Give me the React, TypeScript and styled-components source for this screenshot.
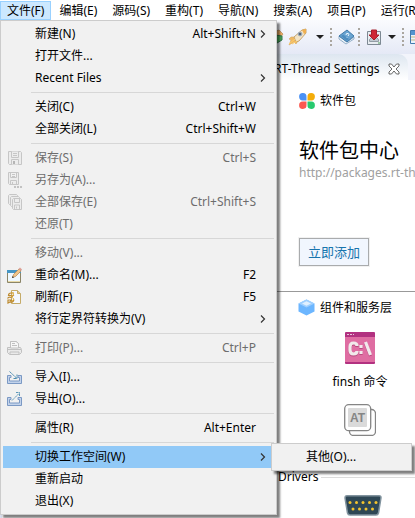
import React from "react";
import styled, { createGlobalStyle, css } from "styled-components";

const GlobalStyle = createGlobalStyle`
  * { box-sizing: border-box; }
  body {
    margin: 0;
    overflow: hidden;
    background: #fff;
    color: #000;
    font: 12px/16px "Noto Sans", "Noto Sans CJK SC", sans-serif;
  }
  button { font: inherit; color: inherit; }
  svg { display: block; flex: none; }
`;

const Window = styled.div`
  display: flex;
  flex-direction: column;
  min-height: 100vh;
  overflow: hidden;
`;

const MenuBar = styled.nav`
  position: relative;
  z-index: 2;
  display: flex;
  gap: 1px;
  height: 20px;
  background: #fff;
`;

const MenuTitle = styled.button<{ $open?: boolean }>`
  flex: none;
  height: 19px;
  margin-top: 1px;
  padding: 1px 6px 0;
  line-height: 16px;
  white-space: nowrap;
  border: 1px solid ${(p) => (p.$open ? "#99d1ff" : "transparent")};
  background: ${(p) => (p.$open ? "#cce8ff" : "transparent")};
`;

const popup = css`
  position: absolute;
  border: 1px solid #ccc;
  background: #f1f1f1;
  padding: 2px;
  box-shadow: 3px 3px 2px rgba(0, 0, 0, 0.5);
`;

const DropDown = styled.div`
  ${popup}
  top: 20px;
  left: 0;
  width: 277px;
`;

const SubMenu = styled.div`
  ${popup}
  top: -3px;
  left: 100%;
  width: 141px;
  margin-left: -3px;
`;

const Entry = styled.div`
  position: relative;
`;

const Item = styled.button<{ $active?: boolean }>`
  display: grid;
  grid-template-columns: 28px 1fr auto 18px;
  align-items: center;
  width: 100%;
  height: 22px;
  padding: 0;
  border: 0;
  text-align: left;
  white-space: nowrap;
  background: ${(p) => (p.$active ? "#91c9f7" : "transparent")};
  &:disabled { color: #6d6d6d; }
`;

const Gutter = styled.span`
  padding-left: 4px;
`;

const Label = styled.span`
  padding-left: 4px;
`;

const Shortcut = styled.span``;

const Arrow = styled.span`
  padding-left: 4px;
`;

const Separator = styled.hr`
  height: 1px;
  margin: 3px 0 3px 28px;
  border: 0;
  background: #d7d7d7;
`;

const ToolBar = styled.div`
  display: flex;
  align-items: center;
  height: 34px;
  padding-left: 268px;
  background: linear-gradient(#fafbfe, #e5e9f6);
`;

const ToolButton = styled.button<{ $width?: number }>`
  display: grid;
  place-items: center;
  flex: none;
  width: ${(p) => p.$width ?? 16}px;
  height: 24px;
  padding: 0;
  border: 0;
  background: none;
`;

const Grip = styled.span`
  flex: none;
  width: 2px;
  height: 18px;
  margin: 0 4px 0 2px;
  background: repeating-linear-gradient(#aaa69f 0 2px, transparent 2px 4px);
`;

const Workbench = styled.div`
  display: grid;
  grid-template-columns: 277px 1fr;
  flex: 1;
`;

const Sidebar = styled.aside`
  border-left: 2px solid #d9dfef;
`;

const Editor = styled.main`
  min-width: 0;
`;

const TabStrip = styled.div`
  display: flex;
  height: 26px;
  background: #f2f4fb;
`;

const Tab = styled.div`
  display: flex;
  align-items: center;
  gap: 8px;
  margin-left: -9px;
  padding: 3px 8px 0 6px;
  white-space: nowrap;
  border-radius: 0 10px 0 0;
  background: linear-gradient(#dde6f0, #fff);
`;

const CloseButton = styled.button`
  padding: 0;
  border: 0;
  background: none;
`;

const Packages = styled.section`
  height: 212px;
  padding: 13px 0 0 22px;
  border-bottom: 1px solid #999;
  white-space: nowrap;
`;

const SectionTitle = styled.h2`
  display: flex;
  align-items: center;
  gap: 5px;
  margin: 0;
  font-size: 12px;
  font-weight: 400;
  line-height: 16px;
`;

const CenterTitle = styled.h1`
  margin: 28px 0 0;
  font-size: 20px;
  font-weight: 400;
  line-height: 28px;
`;

const Address = styled.a`
  display: block;
  color: #a0a0a0;
  text-decoration: none;
`;

const AddButton = styled.button`
  display: block;
  height: 28px;
  margin-top: 57px;
  padding: 0 8px;
  font-size: 13px;
  color: #1874ad;
  border: 1px solid #a9abad;
  outline: 1px solid #f1f1f1;
  background: #f1f6fe;
`;

const Components = styled.section`
  padding-top: 7px;
`;

const ComponentTitle = styled(SectionTitle)`
  padding-left: 21px;
`;

const Tile = styled.button`
  display: flex;
  flex-direction: column;
  align-items: center;
  gap: 10px;
  width: 76px;
  margin: 16px 0 0 45px;
  padding: 0;
  border: 0;
  background: none;
`;

const AtTile = styled(Tile)`
  margin-top: 14px;
`;

const Group = styled.fieldset`
  min-width: 0;
  margin: 33px 0 0;
  padding: 0;
  border: 0;
  border-top: 1px solid #dcdcdc;
`;

const Legend = styled.legend`
  padding: 0 3px 0 1px;
`;

const DriverTile = styled(Tile)`
  width: 82px;
  margin-top: 10px;
`;

const SaveIcon = () => (
  <svg width="16" height="16" viewBox="0 0 16 16" fill="#ececec" stroke="#c6c6c6">
    <path d="M1.5 1.5h12l1 1v12h-12l-1-1z" />
    <path d="M4.5 1.5v6h7v-6M6 3.5h4M6 5.5h4M4.5 14.5v-5h7v5" />
    <path d="M6 11h2v3H6z" fill="#b5b5b5" stroke="none" />
  </svg>
);

const SaveAsIcon = () => (
  <svg width="16" height="16" viewBox="0 0 16 16" fill="#ececec" stroke="#c6c6c6">
    <path d="M1.500.5h10v12h-9l-1-1zM3.500.5v5h6v-5M5 2.500h3M5 4.500h3M3.500 12.500v-4h6v4M5.500 10v2" />
    <path d="M7 14h2v2H7zm3 0h2v2h-2zm3 0h2v2h-2z" fill="#aaa" stroke="#f1f1f1" strokeWidth=".4" />
  </svg>
);

const SaveAllIcon = () => (
  <svg width="16" height="16" viewBox="0 0 16 16" fill="#ececec" stroke="#c6c6c6">
    <path d="M1.500 1.500l1-1h7l1 1v9h-8l-1-1z" />
    <path d="M3.500 3.500l1-1h7l1 1v9h-8l-1-1z" />
    <path d="M5.500 5.500l1-1h7l1 1v10h-8l-1-1zM7.500 4.500v4h5v-4M7.500 15v-4h5v4M9.500 12.500v2" />
  </svg>
);

const RenameIcon = () => (
  <svg width="16" height="16" viewBox="0 0 16 16">
    <path d="M.5 3.500h13v12H.5z" fill="#eef8ff" stroke="#8b8568" />
    <path d="M0 3h14v3H0z" fill="#4596c5" />
    <path d="M1 14.500h12" stroke="#e7d9a8" />
    <path d="M5.500 10.500l1-3L12 2l2 2-5.500 5.500z" fill="#f0c58a" stroke="#b98f5e" strokeWidth=".8" />
    <path d="M11.500 2L13 .5l2 2L14 4z" fill="#dd9e93" />
    <path d="M5 11l.6-2 1.400 1.400z" fill="#333" />
  </svg>
);

const RefreshIcon = () => (
  <svg width="16" height="16" viewBox="0 0 16 16" fill="none">
    <path d="M4.500 1.500h6l3 3v10h-9z" fill="#f4f8fe" stroke="#c5ab69" />
    <path d="M10.500 1.500v3h3" fill="#e6cc91" stroke="#c5ab69" />
    <path d="M7 4H4Q1.500 4 1.500 6.500H6L4 8.500M.5 9.500Q1.500 7.500 4 8.500M7 10.500Q6 14 3 13L1 14v-3h4L3 12" stroke="#bd8a2f" strokeWidth="1.200" />
    <path d="M4.500 3L7 5 4.500 7M4.500 8L7 10l-2 2" stroke="#e5b84d" />
  </svg>
);

const PrintIcon = () => (
  <svg width="16" height="16" viewBox="0 0 16 16" fill="#eaeaea" stroke="#c1c1c1">
    <path d="M.5 7.500h3v-6h6l2 2v4h2l1 2v3l-2 2h-10l-2-2z" />
    <path d="M3.500 8V1.500H9l2.500 2V8zM5 3.500h3M5 5.500h5" fill="#f7f7f7" />
    <path d="M1 9.500h13M3 14v-2h9v2" />
  </svg>
);

const TransferIcon = ({ out = false }: { out?: boolean }) => (
  <svg width="16" height="16" viewBox="0 0 16 16" fill="none">
    <path d="M4 6.500H.5v8h14v-8H11v2h1.500v3.500h-10V8.500H4z" fill="#c3d3eb" stroke="#7b99c4" />
    {out ? (
      <path d="M5 9.500l7.500-7.500M9 1.500h3.500V5" stroke="#5b97b8" strokeDasharray="2 .5" />
    ) : (
      <path d="M2.500 2.500L10 9.500M10 5.500v4H6" stroke="#4b8db1" strokeDasharray="2 .5" />
    )}
  </svg>
);

const ArrowIcon = () => (
  <svg width="6" height="8" viewBox="0 0 6 8" fill="none" stroke="#333" strokeWidth="1.200">
    <path d="M1 .5l3.500 3.500L1 7.500" />
  </svg>
);

const PlugIcon = () => (
  <svg width="16" height="16" viewBox="0 0 16 16">
    <path d="M8 2l3-1 4 4-2 3-5-2z" fill="#f4b267" stroke="#b98a55" strokeWidth=".7" />
    <path d="M7 6l7 1v4l-5 3-4-3z" fill="#4fb05f" stroke="#35794a" />
  </svg>
);

const RocketIcon = () => (
  <svg width="20" height="18" viewBox="0 0 20 18">
    <path d="M3 9h4l3 4-2 3-2-2-5 3 2-5-2-1z" fill="#f0b862" stroke="#d5a764" strokeWidth=".6" />
    <path d="M6 9l8-7 4-1v4l-7 8-3 1z" fill="#f3e4c6" stroke="#c6a672" />
    <path d="M14 2l4-1v4l-2 1z" fill="#f0b050" />
    <circle cx="12" cy="6" r="2" fill="#54667c" stroke="#b0bdc9" />
    <path d="M1 16l6-5M4 16l5-3" stroke="#ffcf69" />
  </svg>
);

const CaretIcon = () => (
  <svg width="8" height="4" viewBox="0 0 8 4"><path d="M0 0h8L4 4z" fill="#202020" /></svg>
);

const BookIcon = () => (
  <svg width="17" height="16" viewBox="0 0 17 16">
    <path d="M1 7v3l7 5 8-5V8l-7 5z" fill="#edf3f8" stroke="#7d9fbd" strokeWidth=".8" />
    <path d="M1 7l8-6 7 6-7 6z" fill="#6aa5d2" stroke="#4079a8" />
    <path d="M3 7l2-1.500 6 4.500-2 2z" fill="#4e8dbf" />
    <path d="M8 6q0-2 2-1.500T10 7M8.500 8l.5.5" stroke="#f4faff" fill="none" />
  </svg>
);

const DownloadIcon = () => (
  <svg width="16" height="17" viewBox="0 0 16 17">
    <path d="M1.500 2.500h13v13h-13z" fill="#e8edf1" stroke="#7d8993" />
    <path d="M3.500 10.500l2-2h5l2 2v2h-9z" fill="#c0c9d0" stroke="#929da5" />
    <path d="M5.500 1h5v5H13l-5 5-5-5h2.500z" fill="#cf2735" stroke="#a7202c" />
    <path d="M12 14h2" stroke="#4f9e57" />
  </svg>
);

const WindowIcon = () => (
  <svg width="16" height="16" viewBox="0 0 16 16">
    <path d="M.5 1.500h15v13H.5z" fill="#e8f2fc" stroke="#427aae" />
    <path d="M1 2h14v4H1z" fill="#5393cf" />
    <path d="M1 8h14M1 11h14" stroke="#c5b981" />
  </svg>
);

const CloseIcon = () => (
  <svg width="12" height="12" viewBox="0 0 12 12" fill="#fff" stroke="#444" strokeWidth=".8">
    <path d="M1 1h2.500L6 4l2.500-3H11v2L8 6l3 3v2H8.500L6 8l-2.500 3H1V9l3-3-3-3z" />
  </svg>
);

const PackageIcon = () => (
  <svg width="16" height="16" viewBox="0 0 16 16">
    <path d="M7.500 7.500H4A3.700 3.700 0 1 1 7.500 4z" fill="#4a91f5" />
    <path d="M8.500 7.500V4A3.700 3.700 0 1 1 12 7.500z" fill="#f4ad0a" />
    <path d="M7.500 8.500V12A3.700 3.700 0 1 1 4 8.500z" fill="#fb5951" />
    <path d="M8.500 8.500H12A3.700 3.700 0 1 1 8.500 12z" fill="#28c96f" />
  </svg>
);

const CubeIcon = () => (
  <svg width="17" height="17" viewBox="0 0 17 17">
    <path d="M.5 4.500L8.500.5l8 4v8l-8 4-8-4z" fill="#6cb6ff" />
    <path d="M.5 4.500L8.500.5l8 4-8 4z" fill="#a0d0ff" />
    <path d="M4 4.500l4.500-2.300L13 4.500 8.500 6.800z" fill="#e0f0ff" />
  </svg>
);

const ConsoleIcon = () => (
  <svg width="30" height="32" viewBox="0 0 30 32" fill="none">
    <rect width="30" height="32" rx="1" fill="#b23180" />
    <path d="M0 5h30v25H0z" fill="#df6da2" />
    <path d="M2 2.500h2m1 0h2m1 0h1" stroke="#e7c7dc" />
    <g strokeWidth="3.200">
      <path d="M12 15Q12 12 8.500 12T5 16v3q0 4 3.500 4t3.500-3M16 14v3M16 20v3M20.500 11l5 13" stroke="#b94c80" />
      <path d="M12 14Q12 11 8.500 11T5 15v3q0 4 3.500 4t3.500-3M16 13v3M16 19v3M20.500 10l5 13" stroke="#f1e9eb" />
    </g>
  </svg>
);

const AtIcon = () => (
  <svg width="32" height="32" viewBox="0 0 32 32">
    <rect x="5.500" y="5.500" width="26" height="26" rx="4" fill="#fff" stroke="#858585" strokeWidth="1.300" />
    <rect x=".7" y=".7" width="26" height="26" rx="4" fill="#fff" stroke="#858585" strokeWidth="1.300" />
    <rect x="4" y="4" width="19" height="19" rx="1" fill="#dadada" />
    <text x="13.500" y="18" textAnchor="middle" fill="#858585" fontFamily="Liberation Sans" fontWeight="700" fontSize="12">AT</text>
  </svg>
);

const SerialIcon = () => (
  <svg width="38" height="21" viewBox="0 0 38 21">
    <path d="M3 .8h32q2 0 2 2L34.500 18q-.5 2-2.500 2H6q-2 0-2.500-2L1 3Q1 .8 3 .8z" fill="#2e4755" stroke="#81939e" strokeWidth="1.500" />
    <g fill="#f4c42d">
      {[6, 12.500, 19, 25.500, 32].map((x) => <circle key={x} cx={x} cy="7.500" r="1.500" />)}
      {[9, 15.500, 22, 28.500].map((x) => <circle key={x} cx={x} cy="14" r="1.500" />)}
    </g>
  </svg>
);

type Command = {
  label: string;
  keys?: string;
  icon?: React.ReactNode;
  disabled?: boolean;
  more?: boolean;
  child?: string;
};

const titles = ["文件(F)", "编辑(E)", "源码(S)", "重构(T)", "导航(N)", "搜索(A)", "项目(P)", "运行(R)"];

const groups: Command[][] = [
  [
    { label: "新建(N)", keys: "Alt+Shift+N", more: true },
    { label: "打开文件..." },
    { label: "Recent Files", more: true },
  ],
  [
    { label: "关闭(C)", keys: "Ctrl+W" },
    { label: "全部关闭(L)", keys: "Ctrl+Shift+W" },
  ],
  [
    { label: "保存(S)", keys: "Ctrl+S", icon: <SaveIcon />, disabled: true },
    { label: "另存为(A)...", icon: <SaveAsIcon />, disabled: true },
    { label: "全部保存(E)", keys: "Ctrl+Shift+S", icon: <SaveAllIcon />, disabled: true },
    { label: "还原(T)", disabled: true },
  ],
  [
    { label: "移动(V)...", disabled: true },
    { label: "重命名(M)...", keys: "F2", icon: <RenameIcon /> },
    { label: "刷新(F)", keys: "F5", icon: <RefreshIcon /> },
    { label: "将行定界符转换为(V)", more: true },
  ],
  [{ label: "打印(P)...", keys: "Ctrl+P", icon: <PrintIcon />, disabled: true }],
  [
    { label: "导入(I)...", icon: <TransferIcon /> },
    { label: "导出(O)...", icon: <TransferIcon out /> },
  ],
  [{ label: "属性(R)", keys: "Alt+Enter" }],
  [
    { label: "切换工作空间(W)", more: true, child: "其他(O)..." },
    { label: "重新启动" },
    { label: "退出(X)" },
  ],
];

const MenuEntry = ({ label, keys, icon, disabled, more, child }: Command) => (
  <Entry>
    <Item role="menuitem" disabled={disabled} $active={!!child}>
      <Gutter>{icon}</Gutter>
      <Label>{label}</Label>
      <Shortcut>{keys}</Shortcut>
      <Arrow>{more && <ArrowIcon />}</Arrow>
    </Item>
    {child && (
      <SubMenu role="menu">
        <MenuEntry label={child} />
      </SubMenu>
    )}
  </Entry>
);

export default function App() {
  return (
    <Window>
      <GlobalStyle />
      <MenuBar>
        {titles.map((title, i) => <MenuTitle key={title} $open={i === 0}>{title}</MenuTitle>)}
        <DropDown role="menu">
          {groups.map((group, i) => (
            <React.Fragment key={i}>
              {i > 0 && <Separator />}
              {group.map((command) => <MenuEntry key={command.label} {...command} />)}
            </React.Fragment>
          ))}
        </DropDown>
      </MenuBar>
      <ToolBar>
        <ToolButton aria-label="连接"><PlugIcon /></ToolButton>
        <ToolButton $width={28} aria-label="启动"><RocketIcon /></ToolButton>
        <ToolButton aria-label="启动选项"><CaretIcon /></ToolButton>
        <Grip />
        <ToolButton $width={20} aria-label="文档"><BookIcon /></ToolButton>
        <Grip />
        <ToolButton $width={20} aria-label="下载"><DownloadIcon /></ToolButton>
        <ToolButton aria-label="下载选项"><CaretIcon /></ToolButton>
        <Grip />
        <ToolButton $width={20} aria-label="窗口"><WindowIcon /></ToolButton>
      </ToolBar>
      <Workbench>
        <Sidebar />
        <Editor>
          <TabStrip>
            <Tab>
              RT-Thread Settings
              <CloseButton aria-label="关闭"><CloseIcon /></CloseButton>
            </Tab>
          </TabStrip>
          <Packages>
            <SectionTitle><PackageIcon />软件包</SectionTitle>
            <CenterTitle>软件包中心</CenterTitle>
            <Address href="#packages">http://packages.rt-thread.org</Address>
            <AddButton>立即添加</AddButton>
          </Packages>
          <Components>
            <ComponentTitle><CubeIcon />组件和服务层</ComponentTitle>
            <Tile><ConsoleIcon />finsh 命令</Tile>
            <AtTile aria-label="AT"><AtIcon /></AtTile>
            <Group>
              <Legend>Drivers</Legend>
              <DriverTile aria-label="串口"><SerialIcon /></DriverTile>
            </Group>
          </Components>
        </Editor>
      </Workbench>
    </Window>
  );
}
